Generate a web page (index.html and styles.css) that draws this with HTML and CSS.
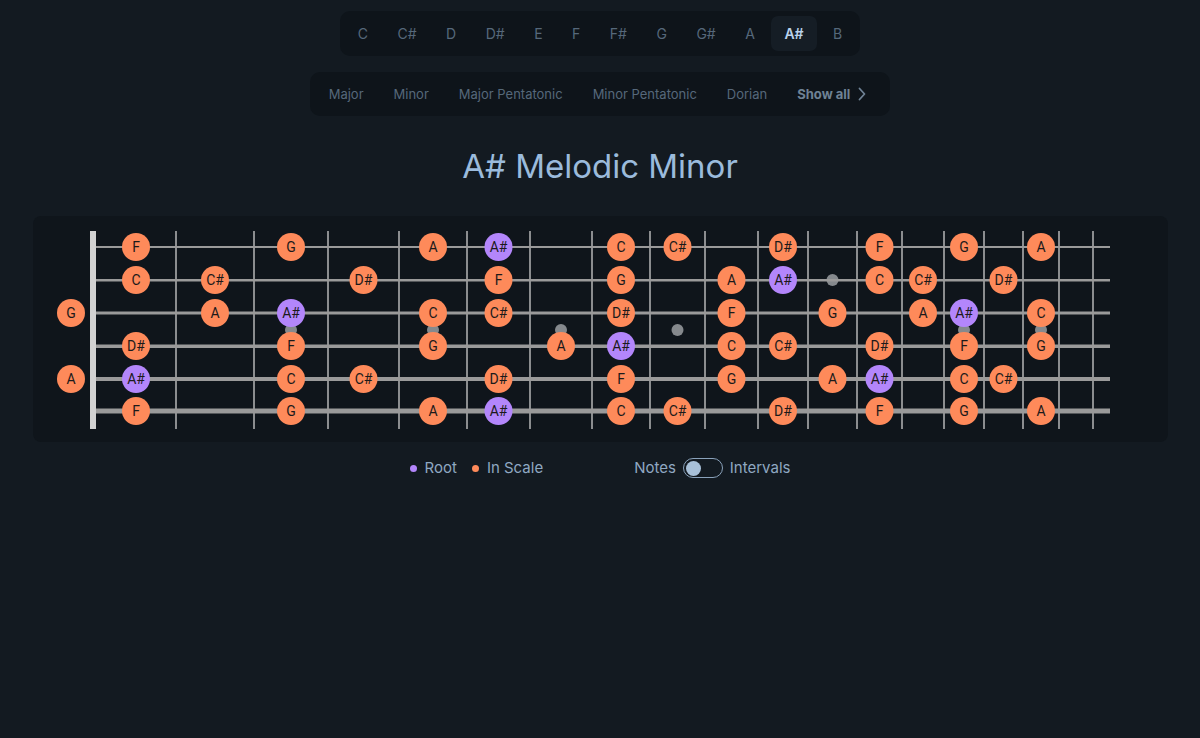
FILE: index.html
```html
<!DOCTYPE html>
<html lang="en">
<head>
<meta charset="utf-8">
<title>A# Melodic Minor</title>
<link rel="stylesheet" href="styles.css">
</head>
<body>
<main class="page">
  <nav class="keys">
    <span class="key">C</span><span class="key">C#</span><span class="key">D</span><span class="key">D#</span><span class="key">E</span><span class="key">F</span><span class="key">F#</span><span class="key">G</span><span class="key">G#</span><span class="key">A</span><span class="key active">A#</span><span class="key">B</span>
  </nav>
  <nav class="scales">
    <span class="scale">Major</span><span class="scale">Minor</span><span class="scale">Major Pentatonic</span><span class="scale">Minor Pentatonic</span><span class="scale">Dorian</span>
    <span class="scale showall">Show all <svg class="chev" width="8" height="14" viewBox="0 0 8 14"><path d="M1.5 1.5 L6.5 7 L1.5 12.5" fill="none" stroke="currentColor" stroke-width="1.8" stroke-linecap="round" stroke-linejoin="round"/></svg></span>
  </nav>
  <h1 class="title">A# Melodic Minor</h1>
  <section class="board">
    <svg class="fret-svg" width="1135" height="226" viewBox="32 216 1135 226">
      <g class="inlays">
        <circle cx="290" cy="330" r="6"/><circle cx="432" cy="330" r="6"/><circle cx="560" cy="330" r="6"/><circle cx="676.5" cy="330" r="6"/>
        <circle cx="831.5" cy="280" r="6"/><circle cx="831.5" cy="379" r="6"/><circle cx="963" cy="330" r="6"/><circle cx="1040" cy="330" r="6"/>
      </g>
      <g class="frets">
        <rect x="174" y="231" width="2" height="198"/><rect x="252" y="231" width="2" height="198"/><rect x="326" y="231" width="2" height="198"/>
        <rect x="397" y="231" width="2" height="198"/><rect x="465" y="231" width="2" height="198"/><rect x="528" y="231" width="2" height="198"/>
        <rect x="590" y="231" width="2" height="198"/><rect x="648" y="231" width="2" height="198"/><rect x="703" y="231" width="2" height="198"/>
        <rect x="756" y="231" width="2" height="198"/><rect x="806" y="231" width="2" height="198"/><rect x="855" y="231" width="2" height="198"/>
        <rect x="900" y="231" width="2" height="198"/><rect x="942" y="231" width="2" height="198"/><rect x="982" y="231" width="2" height="198"/>
        <rect x="1021" y="231" width="2" height="198"/><rect x="1057" y="231" width="2" height="198"/><rect x="1091" y="231" width="2" height="198"/>
      </g>
      <g class="strings">
        <rect x="92" y="246" width="1017" height="2"/>
        <rect x="92" y="279" width="1017" height="2.5"/>
        <rect x="92" y="311.5" width="1017" height="3"/>
        <rect x="92" y="344.5" width="1017" height="3.5"/>
        <rect x="92" y="377" width="1017" height="4"/>
        <rect x="92" y="408.5" width="1017" height="5"/>
      </g>
      <rect class="nut" x="89" y="231" width="6" height="198"/>
      <g class="notes">
        <!-- string 1 -->
        <g transform="translate(135 247)"><circle class="n" r="14"/><text>F</text></g>
        <g transform="translate(290 247)"><circle class="n" r="14"/><text>G</text></g>
        <g transform="translate(432 247)"><circle class="n" r="14"/><text>A</text></g>
        <g transform="translate(497.5 247)"><circle class="r" r="14"/><text>A#</text></g>
        <g transform="translate(620 247)"><circle class="n" r="14"/><text>C</text></g>
        <g transform="translate(676.5 247)"><circle class="n" r="14"/><text>C#</text></g>
        <g transform="translate(782 247)"><circle class="n" r="14"/><text>D#</text></g>
        <g transform="translate(878.5 247)"><circle class="n" r="14"/><text>F</text></g>
        <g transform="translate(963 247)"><circle class="n" r="14"/><text>G</text></g>
        <g transform="translate(1040 247)"><circle class="n" r="14"/><text>A</text></g>
        <!-- string 2 -->
        <g transform="translate(135 280)"><circle class="n" r="14"/><text>C</text></g>
        <g transform="translate(214 280)"><circle class="n" r="14"/><text>C#</text></g>
        <g transform="translate(362.5 280)"><circle class="n" r="14"/><text>D#</text></g>
        <g transform="translate(497.5 280)"><circle class="n" r="14"/><text>F</text></g>
        <g transform="translate(620 280)"><circle class="n" r="14"/><text>G</text></g>
        <g transform="translate(730.5 280)"><circle class="n" r="14"/><text>A</text></g>
        <g transform="translate(782 280)"><circle class="r" r="14"/><text>A#</text></g>
        <g transform="translate(878.5 280)"><circle class="n" r="14"/><text>C</text></g>
        <g transform="translate(922 280)"><circle class="n" r="14"/><text>C#</text></g>
        <g transform="translate(1002.5 280)"><circle class="n" r="14"/><text>D#</text></g>
        <!-- string 3 -->
        <g transform="translate(70 313)"><circle class="n" r="14"/><text>G</text></g>
        <g transform="translate(214 313)"><circle class="n" r="14"/><text>A</text></g>
        <g transform="translate(290 313)"><circle class="r" r="14"/><text>A#</text></g>
        <g transform="translate(432 313)"><circle class="n" r="14"/><text>C</text></g>
        <g transform="translate(497.5 313)"><circle class="n" r="14"/><text>C#</text></g>
        <g transform="translate(620 313)"><circle class="n" r="14"/><text>D#</text></g>
        <g transform="translate(730.5 313)"><circle class="n" r="14"/><text>F</text></g>
        <g transform="translate(831.5 313)"><circle class="n" r="14"/><text>G</text></g>
        <g transform="translate(922 313)"><circle class="n" r="14"/><text>A</text></g>
        <g transform="translate(963 313)"><circle class="r" r="14"/><text>A#</text></g>
        <g transform="translate(1040 313)"><circle class="n" r="14"/><text>C</text></g>
        <!-- string 4 -->
        <g transform="translate(135 346)"><circle class="n" r="14"/><text>D#</text></g>
        <g transform="translate(290 346)"><circle class="n" r="14"/><text>F</text></g>
        <g transform="translate(432 346)"><circle class="n" r="14"/><text>G</text></g>
        <g transform="translate(560 346)"><circle class="n" r="14"/><text>A</text></g>
        <g transform="translate(620 346)"><circle class="r" r="14"/><text>A#</text></g>
        <g transform="translate(730.5 346)"><circle class="n" r="14"/><text>C</text></g>
        <g transform="translate(782 346)"><circle class="n" r="14"/><text>C#</text></g>
        <g transform="translate(878.5 346)"><circle class="n" r="14"/><text>D#</text></g>
        <g transform="translate(963 346)"><circle class="n" r="14"/><text>F</text></g>
        <g transform="translate(1040 346)"><circle class="n" r="14"/><text>G</text></g>
        <!-- string 5 -->
        <g transform="translate(70 379)"><circle class="n" r="14"/><text>A</text></g>
        <g transform="translate(135 379)"><circle class="r" r="14"/><text>A#</text></g>
        <g transform="translate(290 379)"><circle class="n" r="14"/><text>C</text></g>
        <g transform="translate(362.5 379)"><circle class="n" r="14"/><text>C#</text></g>
        <g transform="translate(497.5 379)"><circle class="n" r="14"/><text>D#</text></g>
        <g transform="translate(620 379)"><circle class="n" r="14"/><text>F</text></g>
        <g transform="translate(730.5 379)"><circle class="n" r="14"/><text>G</text></g>
        <g transform="translate(831.5 379)"><circle class="n" r="14"/><text>A</text></g>
        <g transform="translate(878.5 379)"><circle class="r" r="14"/><text>A#</text></g>
        <g transform="translate(963 379)"><circle class="n" r="14"/><text>C</text></g>
        <g transform="translate(1002.5 379)"><circle class="n" r="14"/><text>C#</text></g>
        <!-- string 6 -->
        <g transform="translate(135 411)"><circle class="n" r="14"/><text>F</text></g>
        <g transform="translate(290 411)"><circle class="n" r="14"/><text>G</text></g>
        <g transform="translate(432 411)"><circle class="n" r="14"/><text>A</text></g>
        <g transform="translate(497.5 411)"><circle class="r" r="14"/><text>A#</text></g>
        <g transform="translate(620 411)"><circle class="n" r="14"/><text>C</text></g>
        <g transform="translate(676.5 411)"><circle class="n" r="14"/><text>C#</text></g>
        <g transform="translate(782 411)"><circle class="n" r="14"/><text>D#</text></g>
        <g transform="translate(878.5 411)"><circle class="n" r="14"/><text>F</text></g>
        <g transform="translate(963 411)"><circle class="n" r="14"/><text>G</text></g>
        <g transform="translate(1040 411)"><circle class="n" r="14"/><text>A</text></g>
      </g>
    </svg>
  </section>
  <div class="legend">
    <div class="legend-items">
      <span class="item"><span class="dot dot-root"></span>Root</span>
      <span class="item"><span class="dot dot-scale"></span>In Scale</span>
    </div>
    <div class="toggle-row">
      <span>Notes</span>
      <span class="toggle"><span class="knob"></span></span>
      <span>Intervals</span>
    </div>
  </div>
</main>
</body>
</html>
```
FILE: styles.css
```css
html, body {
  margin: 0;
  padding: 0;
  background: #131a21;
}
body {
  font-family: Inter, "Noto Sans", sans-serif;
  color: #8fa8c2;
  width: 1200px;
  height: 738px;
  overflow: hidden;
}
.page {
  display: flex;
  flex-direction: column;
  align-items: center;
  padding: 11px 32px 0;
}
.keys {
  display: flex;
  gap: 3.5px;
  padding: 5px;
  background: #0e141a;
  border-radius: 10px;
}
.key {
  padding: 7px 13px;
  font-size: 14px;
  line-height: 21px;
  color: #56687a;
  border-radius: 7px;
}
.key.active {
  background: #151d25;
  color: #b9d2ec;
  font-weight: 600;
}
.scales {
  display: flex;
  align-items: center;
  margin-top: 16px;
  padding: 4px;
  background: #0e141a;
  border-radius: 10px;
}
.scale {
  padding: 8px 15px;
  font-size: 13px;
  line-height: 20px;
  color: #56687a;
}
.showall {
  display: flex;
  align-items: center;
  gap: 8px;
  font-weight: 700;
  color: #6f8295;
  padding-right: 20px;
}
.chev {
  display: block;
}
.title {
  margin: 30px 0 0;
  font-size: 33px;
  line-height: 40px;
  font-weight: 400;
  color: #9bbbdc;
}
.board {
  margin-top: 30px;
  width: 1135px;
  height: 226px;
  background: #0f151b;
  border-radius: 8px;
}
.fret-svg {
  display: block;
}
.inlays circle { fill: #85898d; }
.frets rect { fill: #8b8d8f; }
.strings rect { fill: #9a9a9a; }
.nut { fill: #d2d2d2; }
.notes .n { fill: #fe8a5a; }
.notes .r { fill: #b386fb; }
.notes text {
  font-family: Roboto, "Liberation Sans", sans-serif;
  font-size: 14px;
  fill: #1c1a1a;
  text-anchor: middle;
  dominant-baseline: central;
}
.legend {
  display: flex;
  align-items: center;
  gap: 91px;
  margin-top: 16px;
  font-size: 15px;
  line-height: 20px;
}
.legend-items {
  display: flex;
  gap: 15px;
}
.item {
  display: flex;
  align-items: center;
  gap: 8px;
}
.dot {
  width: 7px;
  height: 7px;
  border-radius: 50%;
}
.dot-root { background: #b386fb; }
.dot-scale { background: #fe8a5a; }
.toggle-row {
  display: flex;
  align-items: center;
  gap: 7px;
}
.toggle {
  display: flex;
  align-items: center;
  width: 34px;
  height: 18px;
  padding: 0 2px;
  border: 1.5px solid #8aa2bb;
  border-radius: 11px;
}
.knob {
  width: 15px;
  height: 15px;
  border-radius: 50%;
  background: #a8c0d8;
}
```
